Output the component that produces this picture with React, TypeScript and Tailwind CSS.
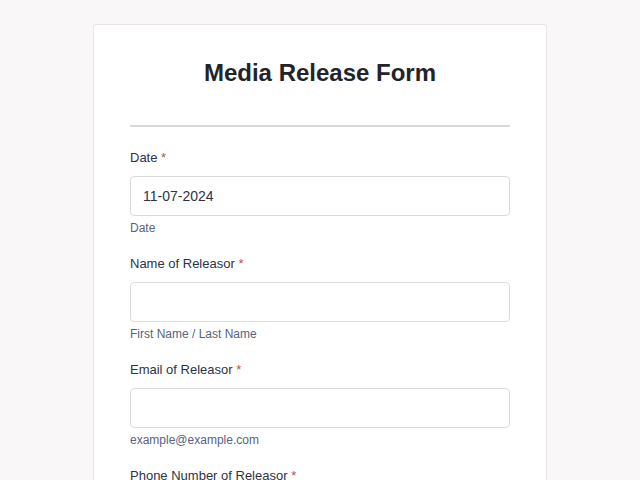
export default function App() {
  const fields = [
    { label: 'Date', value: '11-07-2024', help: 'Date' },
    { label: 'Name of Releasor', value: '', help: 'First Name / Last Name' },
    { label: 'Email of Releasor', value: '', help: 'example@example.com' },
    { label: 'Phone Number of Releasor', value: '', help: '(000) 000-0000' },
  ]

  return (
    <div className="min-h-screen h-[480px] overflow-hidden bg-[#f9f7f8] pt-6 font-['Liberation_Sans',Arial,sans-serif]">
      <div className="mx-auto w-[454px] rounded-[3px] border border-[#e6e6e6] bg-white px-9 pt-[32px] pb-10">
        <h1 className="text-center text-[24px] leading-8 font-bold text-[#222429]">Media Release Form</h1>
        <div className="mt-9 h-[2px] bg-[#d8d8d8]" />
        <div className="mt-[21px] flex flex-col gap-[18px]">
          {fields.map((f) => (
            <div key={f.label}>
              <label className="block text-[13px] leading-5 text-[#2c3345]">
                {f.label} <span className="text-[#b5504c]">*</span>
              </label>
              <input
                readOnly
                value={f.value}
                className="mt-2 block h-10 w-full rounded-[4px] border border-[#dcdcdc] bg-white px-3 text-[14px] text-[#2c3345] outline-none"
              />
              <div className="mt-1 text-[12px] leading-4 text-[#57647e]">{f.help}</div>
            </div>
          ))}
        </div>
      </div>
    </div>
  )
}
